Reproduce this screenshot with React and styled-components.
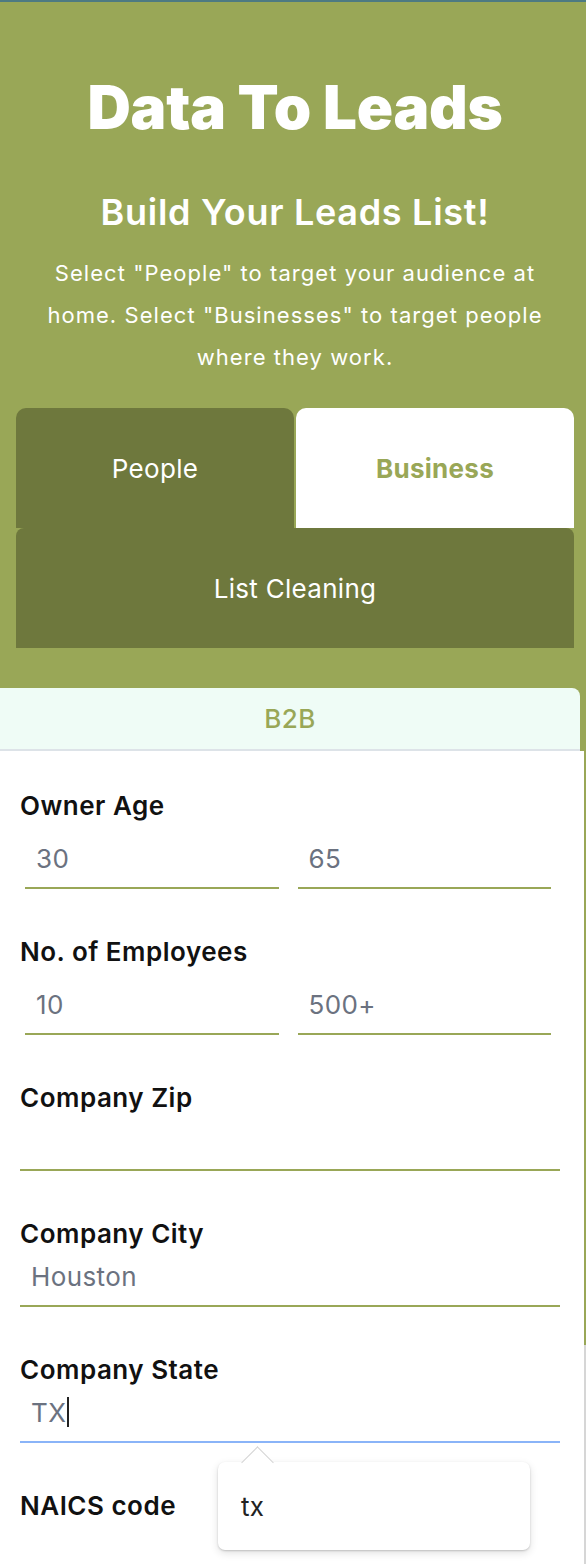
import React from "react";
import styled, { createGlobalStyle } from "styled-components";

const GREEN = "#99a757";
const OLIVE = "#6e783d";

const Global = createGlobalStyle`
  html, body { margin: 0; padding: 0; background: #ffffff; }
  body { font-family: Inter, "Noto Sans", sans-serif; -webkit-font-smoothing: antialiased; }
  * { box-sizing: border-box; }
`;

const Page = styled.div`
  min-height: 100vh;
  display: flex;
  flex-direction: column;
  background: ${GREEN};
  border-top: 2px solid #4d7a82;
`;

const Header = styled.header`
  display: flex;
  flex-direction: column;
  align-items: center;
  padding: 70px 12px 40px 16px;
  color: #ffffff;
  text-align: center;
`;

const Title = styled.h1`
  margin: 0;
  font-size: 60px;
  line-height: 70px;
  font-weight: 900;
  letter-spacing: -0.2px;
`;

const Subtitle = styled.h2`
  margin: 50px 0 0;
  font-size: 36px;
  line-height: 41px;
  font-weight: 600;
  letter-spacing: 0.7px;
`;

const Intro = styled.p`
  margin: 19px 0 0;
  max-width: 524px;
  font-size: 22px;
  line-height: 42px;
  font-weight: 400;
  letter-spacing: 1.05px;
`;

const TabGrid = styled.div`
  margin-top: 30px;
  align-self: stretch;
  display: grid;
  grid-template-columns: 1fr 1fr;
  column-gap: 2px;
`;

const Tab = styled.button`
  height: 120px;
  border: none;
  font-family: inherit;
  font-size: 26px;
  letter-spacing: 0.3px;
  font-weight: ${(p) => (p.$active ? 700 : 400)};
  color: ${(p) => (p.$active ? GREEN : "#ffffff")};
  background: ${(p) => (p.$active ? "#ffffff" : OLIVE)};
  grid-column: ${(p) => (p.$wide ? "1 / span 2" : "auto")};
  border-radius: ${(p) => (p.$wide ? "8px 8px 0 0" : "10px 10px 0 0")};
  cursor: pointer;
`;

const Main = styled.div`
  flex: 1;
  display: flex;
`;

const Panel = styled.section`
  flex: 1;
  display: flex;
  flex-direction: column;
`;

const ScrollTrack = styled.div`
  width: 2px;
  flex: none;
  background: linear-gradient(${GREEN} 0 657px, #d6d6d6 657px 100%);
`;

const PanelTab = styled.div`
  height: 63px;
  margin-right: 4px;
  display: flex;
  align-items: center;
  justify-content: center;
  background: #effcf6;
  border-bottom: 2px solid #dde3e8;
  border-radius: 0 8px 0 0;
  color: ${GREEN};
  font-size: 26px;
  letter-spacing: 0.4px;
  font-weight: 450;
`;

const Form = styled.form`
  flex: 1;
  background: #ffffff;
  padding: 40px 24px 0 20px;
  display: flex;
  flex-direction: column;
`;

const Field = styled.div`
  position: relative;
  margin-bottom: 48px;
`;

const Label = styled.div`
  font-size: 26px;
  line-height: 30px;
  font-weight: 600;
  letter-spacing: 0.5px;
  color: #111111;
`;

const Pair = styled.div`
  display: grid;
  grid-template-columns: 1fr 1fr;
  column-gap: 19px;
  padding: 10px 9px 0 5px;
`;

const InputBox = styled.div`
  height: 58px;
  display: flex;
  align-items: center;
  padding: 0 11px 2px;
  border-bottom: 2px solid ${(p) => (p.$focused ? "#8ab4f8" : GREEN)};
  font-size: 26px;
  letter-spacing: 0.4px;
  color: #6b7280;
`;

const Caret = styled.span`
  display: inline-block;
  width: 1.5px;
  height: 30px;
  margin-left: 1px;
  background: #222222;
`;

const Suggestions = styled.ul`
  position: absolute;
  left: 198px;
  top: 107px;
  width: 312px;
  height: 88px;
  margin: 0;
  padding: 0 23px;
  list-style: none;
  background: #ffffff;
  border-radius: 7px;
  box-shadow: 0 1px 2px rgba(0, 0, 0, 0.18), 0 3px 8px rgba(0, 0, 0, 0.12);
  display: flex;
  align-items: center;
  &::before {
    content: "";
    position: absolute;
    left: 28px;
    top: -11px;
    width: 22px;
    height: 22px;
    background: #ffffff;
    border-left: 1px solid #d4d4d4;
    border-top: 1px solid #d4d4d4;
    transform: rotate(45deg);
  }
`;

const Suggestion = styled.li`
  position: relative;
  font-size: 26px;
  letter-spacing: 0.3px;
  color: #222222;
`;

export default function App() {
  return (
    <>
      <Global />
      <Page>
        <Header>
          <Title>Data To Leads</Title>
          <Subtitle>Build Your Leads List!</Subtitle>
          <Intro>
            Select "People" to target your audience at home. Select "Businesses" to target people where they work.
          </Intro>
          <TabGrid>
            <Tab type="button">People</Tab>
            <Tab type="button" $active>Business</Tab>
            <Tab type="button" $wide>List Cleaning</Tab>
          </TabGrid>
        </Header>
        <Main>
          <Panel>
            <PanelTab>B2B</PanelTab>
            <Form>
              <Field>
                <Label>Owner Age</Label>
                <Pair>
                  <InputBox>30</InputBox>
                  <InputBox>65</InputBox>
                </Pair>
              </Field>
              <Field>
                <Label>No. of Employees</Label>
                <Pair>
                  <InputBox>10</InputBox>
                  <InputBox>500+</InputBox>
                </Pair>
              </Field>
              <Field>
                <Label>Company Zip</Label>
                <InputBox />
              </Field>
              <Field>
                <Label>Company City</Label>
                <InputBox>Houston</InputBox>
              </Field>
              <Field>
                <Label>Company State</Label>
                <InputBox $focused>
                  TX<Caret />
                </InputBox>
                <Suggestions>
                  <Suggestion>tx</Suggestion>
                </Suggestions>
              </Field>
              <Field>
                <Label>NAICS code</Label>
              </Field>
            </Form>
          </Panel>
          <ScrollTrack />
        </Main>
      </Page>
    </>
  );
}
